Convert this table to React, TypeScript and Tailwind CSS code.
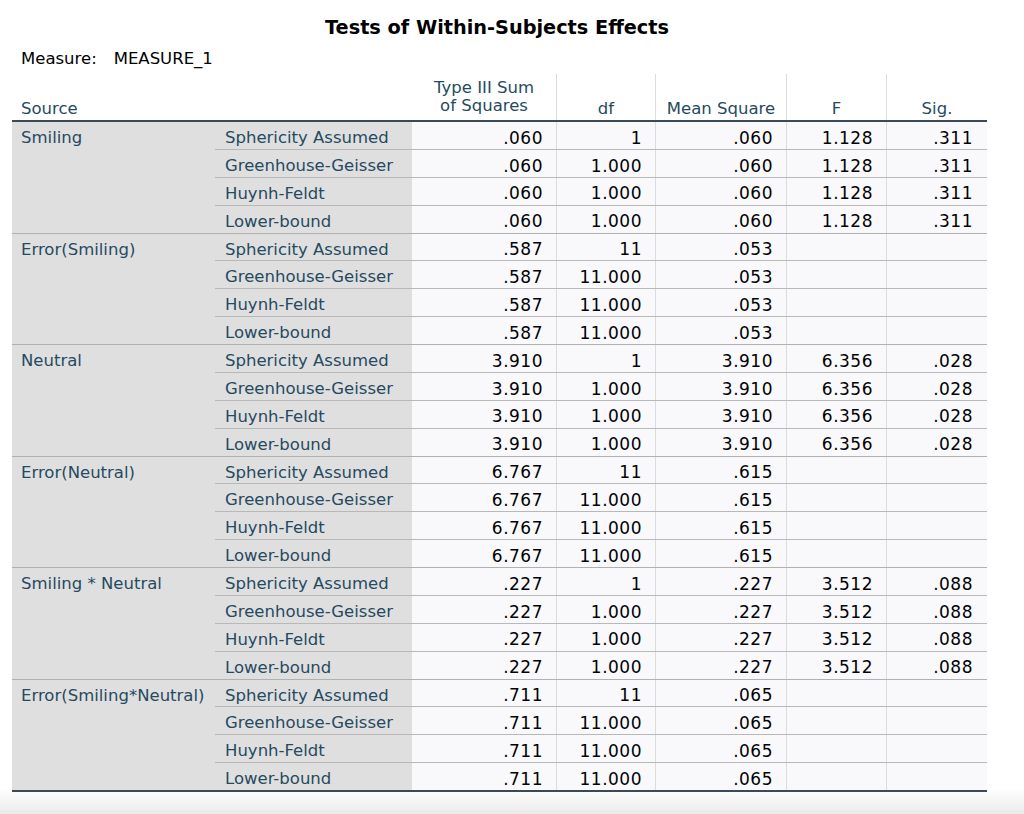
import React from "react";

type Row = { label: string; ss: string; df: string; ms: string; f: string; sig: string };
type Group = { source: string; rows: Row[] };

const methods = ["Sphericity Assumed", "Greenhouse-Geisser", "Huynh-Feldt", "Lower-bound"];

function mk(source: string, ss: string, ms: string, f: string, sig: string, error: boolean): Group {
  return {
    source,
    rows: methods.map((m, i) => ({
      label: m,
      ss,
      df: i === 0 ? (error ? "11" : "1") : error ? "11.000" : "1.000",
      ms,
      f,
      sig,
    })),
  };
}

const groups: Group[] = [
  mk("Smiling", ".060", ".060", "1.128", ".311", false),
  mk("Error(Smiling)", ".587", ".053", "", "", true),
  mk("Neutral", "3.910", "3.910", "6.356", ".028", false),
  mk("Error(Neutral)", "6.767", ".615", "", "", true),
  mk("Smiling * Neutral", ".227", ".227", "3.512", ".088", false),
  mk("Error(Smiling*Neutral)", ".711", ".065", "", "", true),
];

const font = { fontFamily: '"DejaVu Sans", "Liberation Sans", sans-serif' };

const numCell =
  "h-full bg-[#f9f9fb] pt-[6px] flex items-center justify-end text-[#010205] text-[17px] tracking-[0.5px]";

export default function App() {
  return (
    <div
      className="w-[1024px] h-[814px] overflow-hidden bg-[linear-gradient(to_bottom,#ffffff_0px,#ffffff_788px,#ebebeb_814px)]"
      style={font}
    >
      <div className="pt-[16px] h-[40px] text-center text-[19.3px] leading-[24px] font-bold text-black pr-[30px]">
        Tests of Within-Subjects Effects
      </div>
      <div className="mt-[9px] h-[20px] pl-[21px] text-[16.5px] leading-[20px] text-black flex">
        <span>Measure:</span>
        <span className="ml-[17px]">MEASURE_1</span>
      </div>
      <div className="ml-[12px] mt-[5px] w-[975px]">
        {/* header */}
        <div className="flex h-[48px] border-b-2 border-[#3a4a56] text-[#264a60] text-[16.5px] leading-[18px]">
          <div className="w-[400px] flex items-end pl-[9px] pb-[2px]">Source</div>
          <div className="w-[144px] flex items-end justify-center text-center pb-[5px]">
            <span>
              Type III Sum
              <br />
              of Squares
            </span>
          </div>
          <div className="w-[99px] border-l border-[#dcdcdc] flex items-end justify-center pb-[2px]">df</div>
          <div className="w-[131px] border-l border-[#dcdcdc] flex items-end justify-center pb-[2px]">Mean Square</div>
          <div className="w-[100px] border-l border-[#dcdcdc] flex items-end justify-center pb-[2px]">F</div>
          <div className="w-[101px] border-l border-[#dcdcdc] flex items-end justify-center pb-[2px]">Sig.</div>
        </div>
        {/* body */}
        {groups.map((g, gi) => (
          <div
            key={gi}
            className={
              "flex " +
              (gi > 0 ? "border-t border-[#b0b0b0] " : "") +
              (gi === groups.length - 1 ? "border-b-2 border-b-[#3a4a56]" : "")
            }
          >
            <div className="w-[203px] bg-[#dfdfdf] pl-[9px] pt-[5px] text-[#264a60] text-[16.5px] leading-[22px] whitespace-nowrap">
              {g.source}
            </div>
            <div className="flex flex-col">
              {g.rows.map((r, ri) => (
                <div
                  key={ri}
                  className={
                    "flex items-center " +
                    (ri < 3 ? "border-b border-[#b8b8b8] h-[27.875px]" : "h-[26.875px]")
                  }
                >
                  <div className="w-[197px] h-full bg-[#dfdfdf] pl-[10px] pt-[6px] flex items-center text-[#264a60] text-[16.5px] whitespace-nowrap">
                    {r.label}
                  </div>
                  <div className={"w-[144px] pr-[13px] " + numCell}>{r.ss}</div>
                  <div className={"w-[99px] border-l border-[#dcdcdc] pr-[13px] " + numCell}>{r.df}</div>
                  <div className={"w-[131px] border-l border-[#dcdcdc] pr-[13px] " + numCell}>{r.ms}</div>
                  <div className={"w-[100px] border-l border-[#dcdcdc] pr-[13px] " + numCell}>{r.f}</div>
                  <div className={"w-[101px] border-l border-[#dcdcdc] pr-[14px] " + numCell}>{r.sig}</div>
                </div>
              ))}
            </div>
          </div>
        ))}
      </div>
    </div>
  );
}
